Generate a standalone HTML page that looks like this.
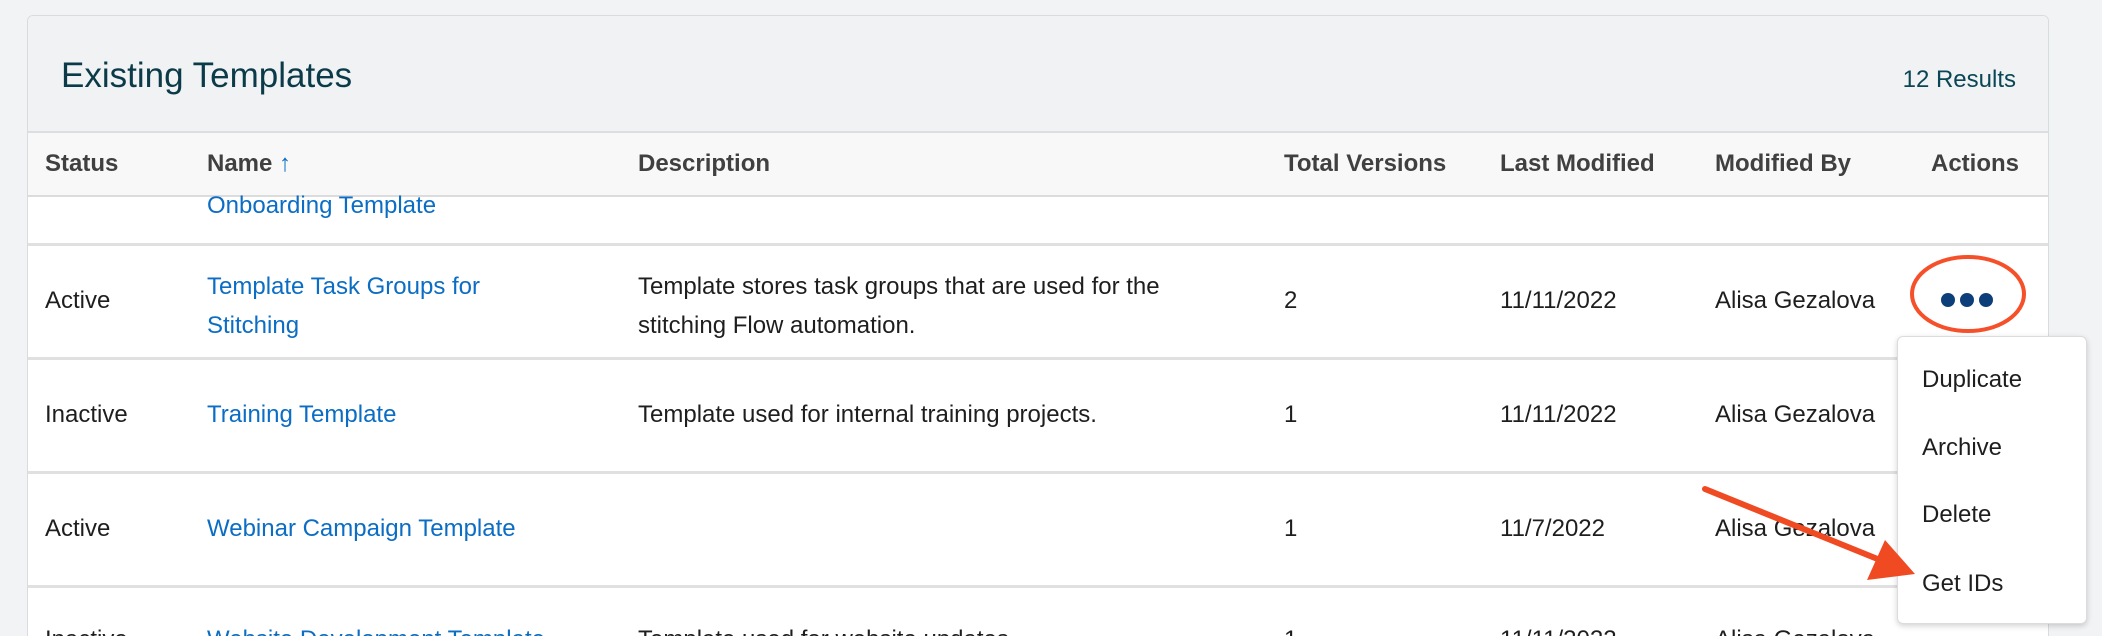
<!DOCTYPE html>
<html style="height:636px;overflow:hidden"><head><meta charset="utf-8"><style>
body{margin:0;width:2102px;height:636px;overflow:hidden;background:#f1f3f5;font-family:"Liberation Sans",Arial,sans-serif;position:relative}
.card{position:absolute;left:27px;top:15px;width:2020px;height:621px;background:#fff;border:1px solid #d9dcdf;border-bottom:none;border-radius:6px 6px 0 0;overflow:hidden}
.hd{position:absolute;left:0;top:0;right:0;height:115px;background:#f0f2f4;border-bottom:2px solid #dcdfe2}
.t{position:absolute;font-size:24px;color:#1e1e1e;white-space:nowrap}
.h{font-weight:bold;color:#404040}
.l{color:#0b6dc4}
.line{position:absolute;left:0;right:0;height:3px;background:#e0e0e0}
</style></head><body>
<div class="card">
 <div class="hd"></div>
 <div style="position:absolute;left:0;right:0;top:117px;height:62px;background:#f8f8f8;border-bottom:2px solid #dcdcdc"></div>
 <div class="t" style="left:33px;top:40px;font-size:35px;color:#0b3a48">Existing Templates</div>
 <div class="t" style="right:32px;top:50px;font-size:24px;color:#0b4656">12 Results</div>
 <div class="t h" style="left:17px;top:134px">Status</div>
 <div class="t h" style="left:179px;top:134px">Name <span style="color:#0b6dc4">↑</span></div>
 <div class="t h" style="left:610px;top:134px">Description</div>
 <div class="t h" style="left:1256px;top:134px">Total Versions</div>
 <div class="t h" style="left:1472px;top:134px">Last Modified</div>
 <div class="t h" style="left:1687px;top:134px">Modified By</div>
 <div class="t h" style="left:1903px;top:134px">Actions</div>
 <div class="t l" style="left:179px;top:176px">Onboarding Template</div>
 <div class="line" style="top:227px"></div>
 <div class="t" style="left:17px;top:271px">Active</div>
 <div class="t l" style="left:179px;top:251px;line-height:39px">Template Task Groups for<br>Stitching</div>
 <div class="t" style="left:610px;top:251px;line-height:39px">Template stores task groups that are used for the<br>stitching Flow automation.</div>
 <div class="t" style="left:1256px;top:271px">2</div>
 <div class="t" style="left:1472px;top:271px">11/11/2022</div>
 <div class="t" style="left:1687px;top:271px">Alisa Gezalova</div>
 <div class="line" style="top:341px"></div>
 <div class="t" style="left:17px;top:385px">Inactive</div>
 <div class="t l" style="left:179px;top:385px">Training Template</div>
 <div class="t" style="left:610px;top:385px">Template used for internal training projects.</div>
 <div class="t" style="left:1256px;top:385px">1</div>
 <div class="t" style="left:1472px;top:385px">11/11/2022</div>
 <div class="t" style="left:1687px;top:385px">Alisa Gezalova</div>
 <div class="line" style="top:455px"></div>
 <div class="t" style="left:17px;top:499px">Active</div>
 <div class="t l" style="left:179px;top:499px">Webinar Campaign Template</div>
 <div class="t" style="left:1256px;top:499px">1</div>
 <div class="t" style="left:1472px;top:499px">11/7/2022</div>
 <div class="t" style="left:1687px;top:499px">Alisa Gezalova</div>
 <div class="line" style="top:569px"></div>
 <div class="t" style="left:17px;top:610px">Inactive</div>
 <div class="t l" style="left:179px;top:610px">Website Development Template</div>
 <div class="t" style="left:610px;top:610px">Template used for website updates.</div>
 <div class="t" style="left:1256px;top:610px">1</div>
 <div class="t" style="left:1472px;top:610px">11/11/2022</div>
 <div class="t" style="left:1687px;top:610px">Alisa Gezalova</div>
</div>
<div style="position:absolute;left:1897px;top:336px;width:188px;height:286px;background:#fff;border:1px solid #dcdcdc;border-radius:6px;box-shadow:0 2px 6px rgba(0,0,0,.18)">
 <div class="t" style="left:24px;top:29px">Duplicate</div>
 <div class="t" style="left:24px;top:97px">Archive</div>
 <div class="t" style="left:24px;top:164px">Delete</div>
 <div class="t" style="left:24px;top:233px">Get IDs</div>
</div>
<svg style="position:absolute;left:0;top:0" width="2102" height="636">
 <ellipse cx="1968" cy="294" rx="56" ry="37" fill="none" stroke="#f5502a" stroke-width="4"/>
 <circle cx="1948" cy="300" r="7" fill="#0c3f7a"/><circle cx="1967" cy="300" r="7" fill="#0c3f7a"/><circle cx="1986" cy="300" r="7" fill="#0c3f7a"/>
 <line x1="1705" y1="489" x2="1880" y2="560" stroke="#f04a23" stroke-width="6" stroke-linecap="round"/>
 <polygon points="1915,574 1867,580 1885,540" fill="#f04a23"/>
</svg>
</body></html>
